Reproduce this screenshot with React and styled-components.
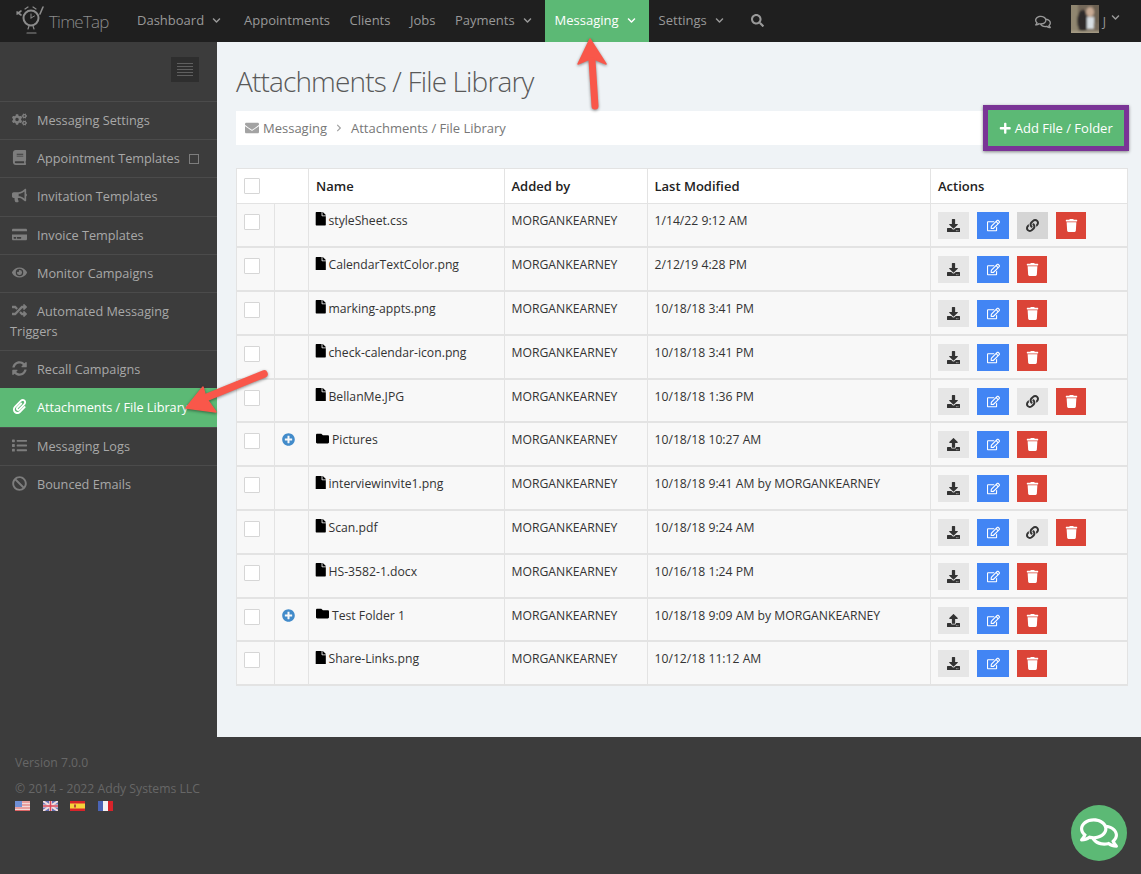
import React from 'react'
import styled, { createGlobalStyle } from 'styled-components'
import {
  FaBan, FaBook, FaBullhorn, FaChevronDown, FaChevronRight, FaCogs, FaCreditCard, FaDownload,
  FaEnvelope, FaEye, FaFile, FaFolder, FaLink, FaList, FaPaperclip, FaPlus, FaPlusCircle, FaRandom,
  FaRegComments, FaRegEdit, FaSearch, FaSyncAlt, FaTrash, FaUpload
} from 'react-icons/fa'

const GREEN = '#5cb975'
const DARK = '#3c3c3c'

const GlobalStyle = createGlobalStyle`
  html, body {
    margin: 0;
    padding: 0;
    height: 100%;
    overflow: hidden;
    background: ${DARK};
    font-family: "Open Sans", "Liberation Sans", sans-serif;
  }
  * { box-sizing: border-box; }
`

const NAV = [
  { label: 'Dashboard', caret: true },
  { label: 'Appointments' },
  { label: 'Clients' },
  { label: 'Jobs' },
  { label: 'Payments', caret: true },
  { label: 'Messaging', caret: true, active: true },
  { label: 'Settings', caret: true }
]

const SIDE = [
  { label: 'Messaging Settings', icon: FaCogs },
  { label: 'Appointment Templates', icon: FaBook, box: true },
  { label: 'Invitation Templates', icon: FaBullhorn },
  { label: 'Invoice Templates', icon: FaCreditCard },
  { label: 'Monitor Campaigns', icon: FaEye },
  { label: 'Automated Messaging Triggers', icon: FaRandom },
  { label: 'Recall Campaigns', icon: FaSyncAlt },
  { label: 'Attachments / File Library', icon: FaPaperclip, active: true },
  { label: 'Messaging Logs', icon: FaList },
  { label: 'Bounced Emails', icon: FaBan }
]

const USER = 'MORGANKEARNEY'

const FILES = [
  { name: 'styleSheet.css', date: '1/14/22 9:12 AM', link: 'dark' },
  { name: 'CalendarTextColor.png', date: '2/12/19 4:28 PM' },
  { name: 'marking-appts.png', date: '10/18/18 3:41 PM' },
  { name: 'check-calendar-icon.png', date: '10/18/18 3:41 PM' },
  { name: 'BellanMe.JPG', date: '10/18/18 1:36 PM', link: 'light' },
  { name: 'Pictures', date: '10/18/18 10:27 AM', folder: true },
  { name: 'interviewinvite1.png', date: '10/18/18 9:41 AM by MORGANKEARNEY' },
  { name: 'Scan.pdf', date: '10/18/18 9:24 AM', link: 'light' },
  { name: 'HS-3582-1.docx', date: '10/16/18 1:24 PM' },
  { name: 'Test Folder 1', date: '10/18/18 9:09 AM by MORGANKEARNEY', folder: true },
  { name: 'Share-Links.png', date: '10/12/18 11:12 AM' }
]

const Page = styled.div`
  position: relative;
  width: 100%;
  height: 874px;
  overflow: hidden;
  background: ${DARK};
`

const TopBar = styled.header`
  display: flex;
  align-items: stretch;
  height: 42px;
  background: #1f1f1f;
  padding-left: 12px;
`

const Logo = styled.div`
  display: flex;
  align-items: center;
  width: 115.5px;
  color: #8c8c8c;
  font-weight: 300;
  font-size: 17px;
  letter-spacing: -0.8px;
`

const LogoMark = styled.svg`
  width: 37px;
  height: 32px;
  margin-top: -5px;
  flex-shrink: 0;
`

const NavItem = styled.a`
  display: flex;
  align-items: center;
  gap: 8px;
  padding: 0 ${(p) => (p.$caret ? 13.5 : 10)}px 2px 9.5px;
  font-size: 13px;
  color: ${(p) => (p.$active ? '#ffffff' : '#999999')};
  background: ${(p) => (p.$active ? GREEN : 'transparent')};
  svg { font-size: 9px; margin-top: 1px; }
`

const SearchItem = styled.a`
  display: flex;
  align-items: center;
  margin-left: 13.5px;
  padding-bottom: 2px;
  color: #999999;
  font-size: 13px;
`

const UserArea = styled.div`
  display: flex;
  align-items: center;
  margin-left: auto;
  padding-right: 21px;
  color: #999999;
  font-size: 12px;
`

const ChatLink = styled(FaRegComments)`
  font-size: 16px;
  margin-right: 20px;
  margin-top: 2px;
`

const Avatar = styled.svg`
  width: 28px;
  height: 28px;
  margin-top: -4px;
  margin-right: 4px;
`

const UserCaret = styled(FaChevronDown)`
  font-size: 9px;
  margin-left: 5px;
  margin-top: -8px;
`

const Body = styled.div`
  display: flex;
  align-items: flex-start;
`

const Sidebar = styled.aside`
  width: 217px;
  flex-shrink: 0;
`

const ToggleRow = styled.div`
  display: flex;
  justify-content: flex-end;
  height: 58.5px;
  padding: 15px 18px 0 0;
`

const Toggle = styled.div`
  display: flex;
  align-items: center;
  justify-content: center;
  width: 28px;
  height: 25px;
  background: #2e2e2e;
`

const ToggleLines = styled.span`
  display: block;
  width: 16px;
  height: 13px;
  background: repeating-linear-gradient(to bottom, #5f5f5f 0, #5f5f5f 1px, transparent 1px, transparent 3px);
`

const SideItem = styled.div`
  padding: 9px 10px;
  min-height: 38.4px;
  font-size: 12.7px;
  line-height: 19.2px;
  color: ${(p) => (p.$active ? '#ffffff' : '#a8a8a8')};
  background: ${(p) => (p.$active ? GREEN : 'transparent')};
  border-top: 1px solid ${(p) => (p.$active ? GREEN : '#4b4b4b')};
`

const SideIcon = styled.span`
  display: inline-flex;
  justify-content: center;
  width: 19px;
  margin-right: 8px;
  vertical-align: -2px;
  color: ${(p) => (p.$active ? '#ffffff' : '#7d7d7d')};
  font-size: 15px;
  line-height: 1;
`

const SmallBox = styled.span`
  display: inline-block;
  width: 10px;
  height: 10px;
  margin-left: 9px;
  vertical-align: -1px;
  border: 1.5px solid #7d7d7d;
`

const Version = styled.div`
  margin-top: 251px;
  padding-left: 15px;
  font-size: 12.2px;
  line-height: 17px;
  color: #676767;
`

const Copyright = styled(Version)`
  margin-top: 9px;
`

const Flags = styled.div`
  display: flex;
  gap: 12.5px;
  padding: 4px 0 0 15px;
`

const Flag = styled.svg`
  width: 15px;
  height: 10px;
`

const Main = styled.main`
  flex: 1;
  height: 695px;
  padding: 0 14px 0 19px;
  background: #eff3f6;
`

const Title = styled.h1`
  margin: 0;
  padding-top: 19px;
  height: 69px;
  font-size: 28px;
  line-height: 40px;
  font-weight: 300;
  letter-spacing: -0.85px;
  color: #595959;
`

const Crumbs = styled.div`
  display: flex;
  align-items: center;
  justify-content: space-between;
  height: 34px;
  padding-left: 9px;
  background: #ffffff;
  font-size: 13px;
  color: #777777;
`

const CrumbPath = styled.div`
  display: flex;
  align-items: center;
  margin-top: -1px;
`

const CrumbIcon = styled(FaEnvelope)`
  font-size: 14px;
  margin-right: 4px;
  color: #a3a3a3;
`

const CrumbSep = styled(FaChevronRight)`
  font-size: 8px;
  margin: 0 8px 0 8px;
  color: #a3a3a3;
`

const AddButton = styled.button`
  display: flex;
  align-items: center;
  justify-content: center;
  gap: 3px;
  width: 146px;
  height: 46px;
  margin-right: -1px;
  padding: 0;
  border: 5px solid #7a3496;
  background: ${GREEN};
  box-shadow: 0 1px 3px rgba(0, 0, 0, 0.45);
  font-family: inherit;
  font-size: 13px;
  font-weight: 500;
  color: #ffffff;
  svg { font-size: 12.5px; }
`

const Table = styled.table`
  width: 891px;
  margin-top: 23px;
  border-collapse: collapse;
  table-layout: fixed;
  background: #ffffff;
  font-size: 12.2px;
  color: #333333;
`

const HeadCell = styled.th`
  height: 35px;
  padding: 0 7px;
  border: 1px solid #e3e3e3;
  text-align: left;
  font-size: 13px;
  font-weight: 600;
  color: #222222;
`

const Row = styled.tr`
  background: #f8f8f8;
  height: 43.8px;
`

const Cell = styled.td`
  padding: 8px 7px 0;
  vertical-align: top;
  border: 1px solid #e3e3e3;
  border-bottom-width: 2px;
  line-height: 17px;
  white-space: nowrap;
`

const BoxCell = styled(Cell)`
  padding: 10px 0 0 7px;
`

const ExpandCell = styled(Cell)`
  padding: 0 0 0 7px;
  color: #428bca;
  font-size: 13px;
  line-height: 1;
  svg { display: block; margin-top: 10px; }
`

const Check = styled.span`
  display: block;
  width: 16px;
  height: 16px;
  background: #ffffff;
  border: 1px solid #d6d6d6;
  border-radius: 1px;
`

const FileName = styled.div`
  display: flex;
  align-items: center;
  gap: ${(p) => (p.$folder ? 3 : 1)}px;
  color: #333333;
  svg {
    color: #000000;
    font-size: ${(p) => (p.$folder ? 13 : 13.5)}px;
    flex-shrink: 0;
    margin: -3px 0 0 ${(p) => (p.$folder ? 0 : -2)}px;
  }
`

const Actions = styled.div`
  display: flex;
  gap: 8px;
`

const ACTION_STYLES = {
  plain: { bg: '#e6e6e6', fg: '#333333', width: 31 },
  edit: { bg: '#4285f4', fg: '#ffffff', width: 32 },
  dark: { bg: '#d5d5d5', fg: '#333333', width: 31 },
  light: { bg: '#e6e6e6', fg: '#333333', width: 31 },
  danger: { bg: '#db4437', fg: '#ffffff', width: 30 }
}

const ActionButton = styled.span`
  display: flex;
  align-items: center;
  justify-content: center;
  width: ${(p) => ACTION_STYLES[p.$kind].width}px;
  height: 27px;
  font-size: 13px;
  background: ${(p) => ACTION_STYLES[p.$kind].bg};
  color: ${(p) => ACTION_STYLES[p.$kind].fg};
`

const ArrowLayer = styled.svg`
  position: absolute;
  top: 0;
  left: 0;
  width: 1141px;
  height: 874px;
  pointer-events: none;
  filter: drop-shadow(0 1.5px 1.5px rgba(0, 0, 0, 0.45));
`

const ChatBubble = styled.div`
  position: absolute;
  left: 1071px;
  top: 805px;
  display: flex;
  align-items: center;
  justify-content: center;
  width: 56px;
  height: 56px;
  border-radius: 50%;
  background: ${GREEN};
  color: #ffffff;
  font-size: 38px;
`

function ClockLogo() {
  return (
    <LogoMark viewBox="0 0 37 32">
      <g fill="none" stroke="#8c8c8c" strokeLinecap="round">
        <circle cx="19" cy="15" r="7.5" strokeWidth="2" />
        <path d="M19 15l3.500-2M19 11v4" strokeWidth="1" />
        <path d="M9 8l-4 3M9 12L5 9M28 11l3-7" strokeWidth="1.600" />
        <path d="M13 6l3-2M21 4l3 2M15 30h9M17 23l-1 3M21 23l1 3" strokeWidth="1.200" />
      </g>
    </LogoMark>
  )
}

function UserPhoto() {
  return (
    <Avatar viewBox="0 0 28 28">
      <defs>
        <filter id="soft"><feGaussianBlur stdDeviation="0.9" /></filter>
        <clipPath id="frame"><rect width="28" height="28" /></clipPath>
      </defs>
      <g clipPath="url(#frame)">
        <rect width="28" height="28" fill="#75695a" />
        <g filter="url(#soft)">
          <rect x="-2" y="-2" width="9" height="32" fill="#90866f" />
          <rect x="22" y="-2" width="8" height="20" fill="#6d6252" />
          <ellipse cx="12" cy="16" rx="6" ry="11" fill="#2d2b2c" />
          <ellipse cx="19" cy="7" rx="4" ry="5" fill="#c8ab95" />
          <rect x="16" y="12" width="7" height="12" fill="#d8dee3" />
          <rect x="-2" y="26" width="32" height="4" fill="#a59b85" />
        </g>
      </g>
    </Avatar>
  )
}

function LangFlag({ kind }) {
  if (kind === 'us') {
    return (
      <Flag viewBox="0 0 15 10">
        <rect width="15" height="10" fill="#f2d8d8" />
        <path d="M0 1h15M0 4h15M0 7h15M0 9.500h15" stroke="#d66" strokeWidth="1" />
        <rect width="7" height="6" fill="#6f8fd6" />
      </Flag>
    )
  }
  if (kind === 'uk') {
    return (
      <Flag viewBox="0 0 15 10">
        <rect width="15" height="10" fill="#6673b8" />
        <path d="M0 0l15 10M15 0L0 10" stroke="#f3dede" strokeWidth="2" />
        <path d="M7.500 0v10M0 5h15" stroke="#f3dede" strokeWidth="3" />
        <path d="M7.500 0v10M0 5h15" stroke="#d9475a" strokeWidth="1.500" />
      </Flag>
    )
  }
  if (kind === 'es') {
    return (
      <Flag viewBox="0 0 15 10">
        <rect width="15" height="10" fill="#d8232a" />
        <rect y="2.500" width="15" height="5" fill="#f5d33a" />
        <rect x="4" y="3.500" width="2" height="3" fill="#b5473a" />
      </Flag>
    )
  }
  return (
    <Flag viewBox="0 0 15 10">
      <rect width="5" height="10" fill="#4a64b5" />
      <rect x="5" width="5" height="10" fill="#f2f2f2" />
      <rect x="10" width="5" height="10" fill="#d8232a" />
    </Flag>
  )
}

function FileRow({ file }) {
  return (
    <Row>
      <BoxCell><Check /></BoxCell>
      <ExpandCell>{file.folder && <FaPlusCircle />}</ExpandCell>
      <Cell>
        <FileName $folder={file.folder}>
          {file.folder ? <FaFolder /> : <FaFile />}
          {file.name}
        </FileName>
      </Cell>
      <Cell>{USER}</Cell>
      <Cell>{file.date}</Cell>
      <Cell>
        <Actions>
          <ActionButton $kind="plain">{file.folder ? <FaUpload /> : <FaDownload />}</ActionButton>
          <ActionButton $kind="edit"><FaRegEdit /></ActionButton>
          {file.link && <ActionButton $kind={file.link}><FaLink /></ActionButton>}
          <ActionButton $kind="danger"><FaTrash /></ActionButton>
        </Actions>
      </Cell>
    </Row>
  )
}

export default function App() {
  return (
    <Page>
      <GlobalStyle />
      <TopBar>
        <Logo><ClockLogo />TimeTap</Logo>
        {NAV.map((item) => (
          <NavItem key={item.label} $active={item.active} $caret={item.caret}>
            {item.label}
            {item.caret && <FaChevronDown />}
          </NavItem>
        ))}
        <SearchItem><FaSearch /></SearchItem>
        <UserArea>
          <ChatLink />
          <UserPhoto />
          J
          <UserCaret />
        </UserArea>
      </TopBar>
      <Body>
        <Sidebar>
          <ToggleRow>
            <Toggle><ToggleLines /></Toggle>
          </ToggleRow>
          {SIDE.map(({ label, icon: Icon, active, box }) => (
            <SideItem key={label} $active={active}>
              <SideIcon $active={active}><Icon /></SideIcon>
              {label}
              {box && <SmallBox />}
            </SideItem>
          ))}
          <Version>Version 7.0.0</Version>
          <Copyright>© 2014 - 2022 Addy Systems LLC</Copyright>
          <Flags>
            <LangFlag kind="us" />
            <LangFlag kind="uk" />
            <LangFlag kind="es" />
            <LangFlag kind="fr" />
          </Flags>
        </Sidebar>
        <Main>
          <Title>Attachments / File Library</Title>
          <Crumbs>
            <CrumbPath>
              <CrumbIcon />
              Messaging
              <CrumbSep />
              Attachments / File Library
            </CrumbPath>
            <AddButton><FaPlus />Add File / Folder</AddButton>
          </Crumbs>
          <Table>
            <colgroup>
              <col style={{ width: 38 }} />
              <col style={{ width: 34 }} />
              <col style={{ width: 195.5 }} />
              <col style={{ width: 143 }} />
              <col style={{ width: 283.5 }} />
              <col style={{ width: 197 }} />
            </colgroup>
            <thead>
              <tr>
                <HeadCell colSpan={2}><Check /></HeadCell>
                <HeadCell>Name</HeadCell>
                <HeadCell>Added by</HeadCell>
                <HeadCell>Last Modified</HeadCell>
                <HeadCell>Actions</HeadCell>
              </tr>
            </thead>
            <tbody>
              {FILES.map((file) => <FileRow key={file.name} file={file} />)}
            </tbody>
          </Table>
        </Main>
      </Body>
      <ChatBubble><FaRegComments /></ChatBubble>
      <ArrowLayer viewBox="0 0 1141 874">
        <g fill="#f9574a" stroke="#f9574a" strokeLinejoin="round" strokeLinecap="round">
          <path d="M592 60L595 106" strokeWidth="7" fill="none" />
          <polygon points="590,39 606,64 592,58 578,64" strokeWidth="1.500" />
          <path d="M264 374L205 398" strokeWidth="7.500" fill="none" />
          <polygon points="186,408 203,387 206,398 216,412" strokeWidth="1.500" />
        </g>
      </ArrowLayer>
    </Page>
  )
}
